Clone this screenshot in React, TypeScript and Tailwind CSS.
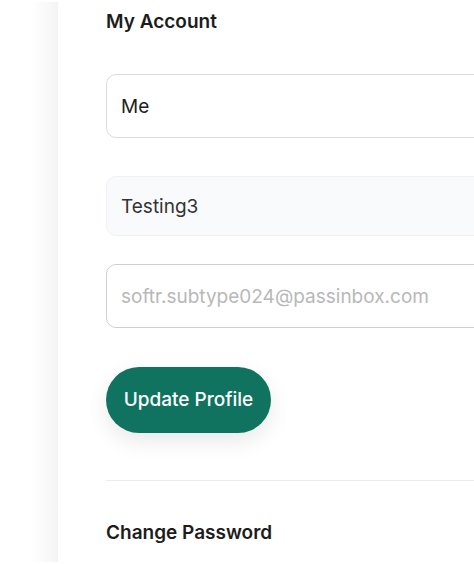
import React from "react";

export default function App() {
  const font = { fontFamily: "Inter, 'Noto Sans', sans-serif" };
  return (
    <div className="flex h-[564px] w-[474px] overflow-hidden bg-white" style={font}>
      <div className="w-[32px] shrink-0" />
      <div className="my-[2px] w-[26px] shrink-0 bg-gradient-to-r from-white to-[#f4f4f4]" />
      <div className="flex min-w-0 flex-1 flex-col pl-[48px] pt-[8px]">
        <h2 className="text-[19px] font-semibold leading-[28px] text-[#1c1c1c]">My Account</h2>
        <input
          readOnly
          defaultValue="Me"
          className="mt-[38px] h-[64px] w-[420px] shrink-0 rounded-[10px] border border-[#dcdcdc] bg-white px-[14px] text-[19px] text-[#222] outline-none"
        />
        <input
          readOnly
          defaultValue="Testing3"
          className="mt-[38px] h-[60px] w-[420px] shrink-0 rounded-[10px] border border-[#f1f1f3] bg-[#f9fafb] px-[14px] text-[19px] text-[#333] outline-none"
        />
        <input
          readOnly
          placeholder="softr.subtype024@passinbox.com"
          className="mt-[28px] h-[64px] w-[420px] shrink-0 rounded-[10px] border border-[#cfcfcf] bg-white px-[14px] text-[19px] text-[#222] outline-none placeholder:text-[#b8b8b8]"
        />
        <div className="mt-[39px]">
          <button className="h-[66px] w-[165px] rounded-full bg-[#0f735f] text-[19px] font-medium text-white shadow-[0_8px_22px_rgba(0,0,0,0.09)]">
            Update Profile
          </button>
        </div>
        <div className="mt-[47px] h-px w-[420px] shrink-0 bg-[#ececec]" />
        <h2 className="mt-[38px] text-[19px] font-semibold leading-[28px] text-[#1c1c1c]">Change Password</h2>
      </div>
    </div>
  );
}
